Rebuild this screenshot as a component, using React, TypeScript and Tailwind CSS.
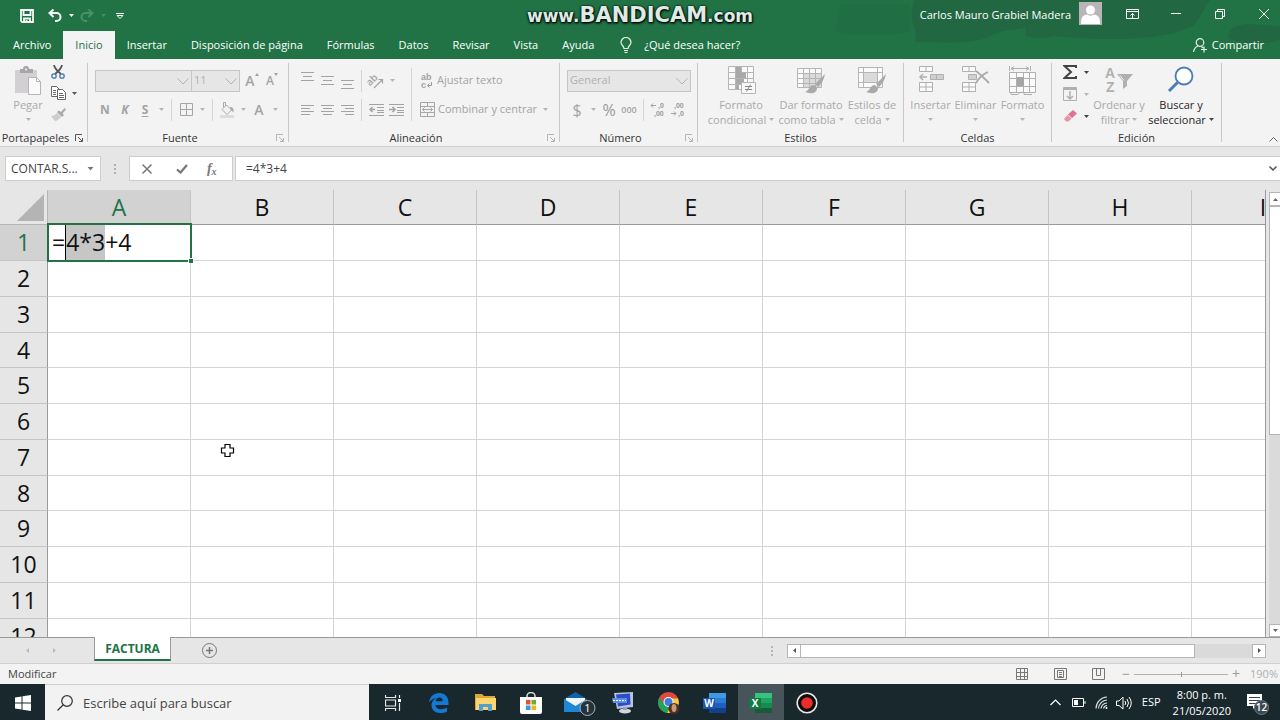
import type { ReactNode } from 'react';
import { clsx } from 'clsx';

const tabs = ['Archivo', 'Inicio', 'Insertar', 'Disposición de página', 'Fórmulas', 'Datos', 'Revisar', 'Vista', 'Ayuda'];
const columns = ['A', 'B', 'C', 'D', 'E', 'F', 'G', 'H', 'I'];
const rows = Array.from({ length: 12 }, (_, i) => i + 1);

const Caret = ({ className = 'text-[#b5b5b5]' }: { className?: string }) => (
  <svg width="5" height="3" viewBox="0 0 5 3" className={clsx('inline-block shrink-0', className)}>
    <path d="M0 0h5L2.5 3z" fill="currentColor" />
  </svg>
);

const CaretButton = ({ label, className }: { label: string; className?: string }) => (
  <button aria-label={label} className="flex h-5 w-3 shrink-0 items-center justify-center">
    <Caret className={className} />
  </button>
);

const IconButton = ({ label, children, className }: { label: string; children: ReactNode; className?: string }) => (
  <button aria-label={label} className={clsx('flex h-5 w-5 shrink-0 items-center justify-center', className)}>
    {children}
  </button>
);

const Divider = () => <span className="mx-1 h-[22px] w-px shrink-0 bg-[#d4d4d4]" />;

const Combo = ({ label, value, className }: { label: string; value: string; className: string }) => (
  <div className={clsx('relative h-[22px] shrink-0', className)}>
    <select
      aria-label={label}
      className="block h-full w-full appearance-none border border-[#c6c6c6] bg-[#e6e6e6] pl-[2px] text-[11px] text-[#b0b0b0] outline-none"
    >
      <option>{value}</option>
    </select>
    <svg width="12" height="7" viewBox="0 0 12 7" className="pointer-events-none absolute right-[3px] top-2">
      <path d="M.5.5 6 6 11.5.5" fill="none" stroke="#b0b0b0" />
    </svg>
  </div>
);

const Launcher = ({ label, className }: { label: string; className: string }) => (
  <button aria-label={label} className={clsx('flex w-4 shrink-0 items-center justify-center', className)}>
    <svg width="8" height="8" viewBox="0 0 8 8" fill="none" stroke="currentColor">
      <path d="M.5 7V.5H7M3 3l4 4M7.5 4v3.5H4" />
    </svg>
  </button>
);

type GroupProps = { title: string; width: string; launcher?: string; children: ReactNode };

const Group = ({ title, width, launcher, children }: GroupProps) => (
  <section aria-label={title} className={clsx('flex shrink-0', width)}>
    <div className="flex min-w-0 flex-1 flex-col">
      <div className="flex h-[67px] pt-[3px]">{children}</div>
      <div className="flex h-4 text-[11px] leading-4 text-[#333]">
        <span className="flex-1 text-center">{title}</span>
        {launcher && <Launcher label={`Configuración de ${title}`} className={launcher} />}
      </div>
    </div>
    <span className="mb-1 w-px bg-[#c8c8c8]" />
  </section>
);

type BigProps = { icon: ReactNode; lines: [string, string]; width: string; active?: boolean };

const BigButton = ({ icon, lines, width, active }: BigProps) => (
  <button
    className={clsx(
      'flex shrink-0 flex-col items-center whitespace-nowrap text-[11px] leading-[15px]',
      width,
      active ? 'text-[#262626]' : 'text-[#a9a9a9]',
    )}
  >
    <span className="flex h-[31px] items-start justify-center">{icon}</span>
    <span>{lines[0]}</span>
    <span className="flex h-[15px] items-center gap-[3px]">
      {lines[1]}
      <Caret className={active ? 'text-[#444]' : 'text-[#b5b5b5]'} />
    </span>
  </button>
);

/* Ribbon icons */

const PasteIcon = () => (
  <svg width="28" height="30" viewBox="0 0 28 30">
    <path d="M1 4h22v23H1z" fill="#d2d0d2" />
    <path d="M6 3h3a3 3 0 0 1 6 0h4v4H6z" fill="#a6a6a6" />
    <circle cx="12" cy="3.500" r="1" fill="#f3f3f3" />
    <path d="M14.500 11.500h8l4 4v13h-12z" fill="#fafafa" stroke="#b5b5b5" />
    <path d="M22.500 11.500v4h4" fill="none" stroke="#b5b5b5" />
  </svg>
);

const CutIcon = () => (
  <svg width="14" height="14" viewBox="0 0 14 14" fill="none">
    <path d="M3 0c.5 3 2 5 7 9M11 0c-.5 3-2 5-7 9" stroke="#555" strokeWidth="1.800" />
    <circle cx="3" cy="11" r="2.200" stroke="#3e78b3" strokeWidth="1.300" />
    <circle cx="11" cy="11" r="2.200" stroke="#3e78b3" strokeWidth="1.300" />
  </svg>
);

const CopyIcon = () => (
  <svg width="15" height="14" viewBox="0 0 15 14" fill="#fff" stroke="#666">
    <path d="M.5.5h5l3 3v7h-8z" />
    <path d="M2 4.500h3M2 6.500h3M2 8.500h3" />
    <path d="M6.500 3.500h5l3 3v7h-8z" />
    <path d="M8 7.500h4M8 9.500h5M8 11.500h5" />
  </svg>
);

const BrushIcon = () => (
  <svg width="15" height="13" viewBox="0 0 15 13">
    <path d="M0 8c3 0 4-1 6-3l4 4c-2 2-4 4-6 4z" fill="#cfcbc9" />
    <path d="m6 4 2-1.500L10 4l3.500-4L15 1.500 11.500 5.500 13 7l-2 2z" fill="#a9a9a9" />
  </svg>
);

const BorderIcon = () => (
  <svg width="13" height="13" viewBox="0 0 13 13" fill="none" stroke="#a6a6a6">
    <path d="M.5.5h12v12H.5zM6.500 1v11M1 6.500h11" />
  </svg>
);

const BucketIcon = () => (
  <svg width="16" height="16" viewBox="0 0 16 16" fill="none">
    <path d="M3 7.500 7.500 3l5 5-4.500 4.500zM6.500 4V.5h-2v5" stroke="#a9a9a9" />
    <path d="M11 5c3 0 4 2 3.500 5.500L12 8z" fill="#a9a9a9" />
    <path d="M1 13h14v3H1z" fill="#dedcdc" />
  </svg>
);

const linePaths = {
  vertical: 'M0 .5h13M2 4.500h9M0 8.500h13',
  left: 'M0 .5h13M0 3.500h9M0 6.500h13M0 9.500h9',
  center: 'M0 .5h13M2 3.500h9M0 6.500h13M2 9.500h9',
  right: 'M0 .5h13M4 3.500h9M0 6.500h13M4 9.500h9',
};

const Lines = ({ kind, className }: { kind: keyof typeof linePaths; className?: string }) => (
  <svg width="13" height="10" viewBox="0 0 13 10" className={className} stroke="#a3a3a3" fill="none">
    <path d={linePaths[kind]} />
  </svg>
);

const IndentIcon = ({ flip }: { flip?: boolean }) => (
  <svg width="15" height="12" viewBox="0 0 15 12" fill="none" stroke="#a3a3a3">
    <path d="M0 .5h15M8 3.500h7M8 6.500h7M8 8.500h7M0 11.500h15" />
    <path d={flip ? 'M0 5.500h6M3.500 3 6 5.500 3.500 8' : 'M6 5.500H1M3.500 3 1 5.500 3.500 8'} strokeWidth="1.500" />
  </svg>
);

const OrientationIcon = () => (
  <svg width="16" height="14" viewBox="0 0 16 14" className="overflow-visible">
    <text x="0" y="10" fontSize="10" fontWeight="600" fill="#a3a3a3" transform="rotate(-45 4 9)">ab</text>
    <path d="M6 14 14 6M10.500 5.500H14.500v4" fill="none" stroke="#a3a3a3" strokeWidth="1.200" />
  </svg>
);

const WrapIcon = () => (
  <svg width="13" height="16" viewBox="0 0 13 16" className="overflow-visible font-['Liberation_Sans']">
    <text x="1" y="7" fontSize="9" fontWeight="700" fill="#a3a3a3">ab</text>
    <text x="1" y="15" fontSize="9" fontWeight="700" fill="#a3a3a3">c</text>
    <path d="M11.500 9v3.500H7.500M9.500 10.500l-2 2 2 2" fill="none" stroke="#999" />
  </svg>
);

const MergeIcon = () => (
  <svg width="15" height="15" viewBox="0 0 15 15" fill="none" stroke="#a6a6a6">
    <path d="M.5.5h14v14H.5zM0 4.500h15M0 10.500h15M7.500 0v4M7.500 11v4M2.500 7.500h10M4.500 5.500l-2 2 2 2M10.500 5.500l2 2-2 2" />
  </svg>
);

const DecimalIcon = ({ less }: { less?: boolean }) => (
  <svg width="16" height="15" viewBox="0 0 16 15" fill="#999" className="overflow-visible font-['Liberation_Sans']">
    <text x={less ? 4 : 8} y="6" fontSize="7" fontWeight="700">{less ? ',00' : ',0'}</text>
    <text x={less ? 8 : 4} y="14" fontSize="7" fontWeight="700">{less ? ',0' : ',00'}</text>
    <path d={less ? 'M1 11.500h5M4 9.500l2 2-2 2' : 'M6 3.500H1M3 1.500l-2 2 2 2'} fill="none" stroke="#a3a3a3" />
  </svg>
);

const ConditionalIcon = () => (
  <svg width="29" height="29" viewBox="0 0 29 29" fill="none" stroke="#b5b5b5">
    <path d="M1.500.5h25v23h-25zM1.500 6.500h25M1.500 12.500h25M1.500 18.500h25M8.500.5v23M14.500.5v23M20.500.5v23" fill="#fafafa" />
    <path d="M9 1h5v6H9zM9 7h10v5H9zM9 13h8v5H9zM9 19h3v4H9z" fill="#a9a9a9" stroke="none" />
    <path d="M14.500 16.500h14v11h-14z" fill="#f7f7f7" />
    <path d="M18 20.500h7M18 23.500h7M23.500 18.500l-4 7" stroke="#888" />
  </svg>
);

const Brush = () => (
  <>
    <path d="M28 8 18 18l3 3c3-3 6-7 7-13z" fill="#a9a9a9" stroke="none" />
    <path d="M17 19c-5 0-4 5-9 7 5 2 12 2 12-4z" fill="#a9a9a9" stroke="none" />
  </>
);

const TableFormatIcon = () => (
  <svg width="28" height="29" viewBox="0 0 28 29" fill="none" stroke="#b5b5b5">
    <path d="M.5 2.500h24v19H.5z" fill="#fafafa" />
    <path d="M7 7h17v14H7z" fill="#dadada" stroke="none" />
    <path d="M.5 7.500h24M.5 12.500h24M.5 17.500h24M6.500 2.500v19M12.500 2.500v19M18.500 2.500v19" />
    <Brush />
  </svg>
);

const CellStyleIcon = () => (
  <svg width="28" height="29" viewBox="0 0 28 29" fill="none" stroke="#b5b5b5">
    <path d="M.5 1.500h24v20H.5z" fill="#fafafa" />
    <path d="M.5 6.500h24M.5 16.500h24M5.500 1.500v20M19.500 1.500v20" />
    <path d="M6 7h13v9H6z" fill="#dadada" stroke="none" />
    <Brush />
  </svg>
);

const InsertIcon = () => (
  <svg width="26" height="26" viewBox="0 0 26 26" fill="#fafafa" stroke="#b0b0b0">
    <path d="M1.500.5h13v5h-13zM8 .5v5" />
    <path d="M12.500 8.500h13v5h-13z" fill="#d0d0d0" />
    <path d="M18.500 8.500v5" />
    <path d="M9 11H2M5 8l-3 3 3 3" fill="none" strokeWidth="1.500" />
    <path d="M1.500 16.500h13v9h-13zM1.500 21h13M8 16.500v9" />
  </svg>
);

const DeleteIcon = () => (
  <svg width="28" height="26" viewBox="0 0 28 26" fill="#fafafa" stroke="#b0b0b0">
    <path d="M.5.5h13v5H.5zM7 .5v5" />
    <path d="M6.500 8.500h8v5h-8z" fill="#d0d0d0" />
    <path d="M.5 16.500h13v9H.5zM.5 21h13M7 16.500v9" />
    <path d="M14 5c4 3 8 7 13 12M26 6c-5 2-9 6-12 11" fill="none" stroke="#a9a9a9" strokeWidth="1.800" />
  </svg>
);

const FormatIcon = () => (
  <svg width="27" height="29" viewBox="0 0 27 29" fill="none" stroke="#b0b0b0">
    <path d="M.5 0v5M21.500 0v5M2 2.500h18M5 .5l-3 2 3 2M17 .5l3 2-3 2" />
    <path d="M.5 6.500h26v20h-26z" fill="#fafafa" />
    <path d="M.5 12.500h26M.5 20.500h26M7.500 6.500v20M14.500 6.500v20M20.500 6.500v20" />
    <path d="M8 11h7v9H8z" fill="#a6a6a6" stroke="none" />
    <path d="M2 27v1.500h7l3-3M15 27v1.500h8" />
  </svg>
);

const FillIcon = () => (
  <svg width="14" height="14" viewBox="0 0 14 14" fill="none" stroke="#b0b0b0">
    <path d="M.5.5h13v13H.5z" />
    <path d="M1 1h12v2H1z" fill="#b0b0b0" stroke="none" />
    <path d="M7 4v8M4 9l3 3 3-3" strokeWidth="1.500" />
  </svg>
);

const EraserIcon = () => (
  <svg width="13" height="12" viewBox="0 0 13 12">
    <path d="M9 0 13 3.500 8 8 4 4.500z" fill="#e0728e" />
    <path d="M3.500 5 7.500 8.500 4.500 11.500H2L0 9z" fill="#e893a8" />
  </svg>
);

const SortIcon = () => (
  <svg width="28" height="28" viewBox="0 0 28 28" fill="#b0b0b0" className="overflow-visible font-['Liberation_Sans']">
    <text x="0" y="12" fontSize="14" fontWeight="700">A</text>
    <text x="1" y="26" fontSize="14" fontWeight="700">Z</text>
    <path d="M12 8h16l-6 7v5l-4 3v-8z" />
    <path d="m15 9.500 4 5" stroke="#f3f3f3" />
  </svg>
);

const SearchIcon = () => (
  <svg width="28" height="28" viewBox="0 0 28 28" fill="none">
    <circle cx="17" cy="10" r="8.500" fill="#fff" stroke="#4a7db5" strokeWidth="1.800" />
    <path d="M10.500 16.500 2 25" stroke="#4a7db5" strokeWidth="3" />
  </svg>
);

/* Window chrome */

const TitleBar = () => (
  <header className="relative flex h-[31px] shrink-0 items-center overflow-hidden pl-[17px] text-white">
    <IconButton label="Guardar">
      <svg width="14" height="14" viewBox="0 0 14 14" fill="none" stroke="#f4faf6" strokeWidth="1.800">
        <path d="M1 1h12v12H2L1 12zM3.500 1v5h7V1M4 13V9.500h6V13M6.500 11v2" />
      </svg>
    </IconButton>
    <IconButton label="Deshacer" className="ml-2">
      <svg width="14" height="13" viewBox="0 0 14 13" fill="none" stroke="#f4faf6" strokeWidth="2">
        <path d="M5.500.5 1.500 4l4 4M2 4h6.500a4 4 0 0 1 0 8H7" />
      </svg>
    </IconButton>
    <CaretButton label="Lista de deshacer" className="text-white" />
    <IconButton label="Rehacer">
      <svg width="14" height="13" viewBox="0 0 14 13" fill="none" stroke="#46906a" strokeWidth="2">
        <path d="m8.500.5 4 3.500-4 4M12 4H5.500a4 4 0 0 0 0 8H7" />
      </svg>
    </IconButton>
    <CaretButton label="Lista de rehacer" className="text-[#46906a]" />
    <IconButton label="Personalizar barra de acceso rápido" className="ml-px">
      <svg width="8" height="6" viewBox="0 0 8 6" fill="none" stroke="#f4faf6">
        <path d="M0 .5h8M1 2.500h6L4 5.500z" />
      </svg>
    </IconButton>

    <div className="absolute left-1/2 top-[3px] flex -translate-x-1/2 items-baseline whitespace-nowrap font-['DejaVu_Sans'] text-[17px] font-bold leading-6 text-[#dfeae4] [text-shadow:0_0_2px_#000,0_1px_3px_#000,1px_1px_2px_#062412]">
      www.<span className="text-[21px] leading-6">BANDICAM</span>.com
    </div>

    <div className="-mr-[6px] ml-auto flex items-center">
      <span className="mr-2 text-[11px]">Carlos Mauro Grabiel Madera</span>
      <svg width="23" height="23" viewBox="0 0 23 23" className="mb-1 mr-2">
        <path d="M0 0h23v23H0z" fill="#b9b5b6" />
        <circle cx="11.500" cy="8" r="4.500" fill="#fff" />
        <path d="M2 22c0-7 2-9 6-9.500 2 1.500 5 1.500 7 0 4 .5 6 2.500 6 9.500z" fill="#fff" />
      </svg>
      <button aria-label="Opciones de la cinta" className="mb-1 flex h-6 w-11 items-center justify-center">
        <svg width="13" height="10" viewBox="0 0 13 10" fill="none" stroke="#fff">
          <path d="M.5.5h12v9H.5zM.5 2.500h12M6.500 9V4.500M4.500 6.500l2-2 2 2" />
        </svg>
      </button>
      <button aria-label="Minimizar" className="mb-1 flex h-6 w-11 items-center justify-center">
        <span className="h-px w-[10px] bg-white" />
      </button>
      <button aria-label="Restaurar" className="mb-1 flex h-6 w-11 items-center justify-center">
        <svg width="10" height="10" viewBox="0 0 10 10" fill="none" stroke="#fff">
          <path d="M.5 2.500h7v7h-7zM2.500 2.500v-2h7v7h-2" />
        </svg>
      </button>
      <button aria-label="Cerrar" className="mb-1 flex h-6 w-11 items-center justify-center">
        <svg width="10" height="10" viewBox="0 0 10 10" stroke="#fff">
          <path d="m0 0 10 10M10 0 0 10" />
        </svg>
      </button>
    </div>
  </header>
);

const TabBar = () => (
  <nav className="relative flex h-7 shrink-0 pl-px text-[11px] text-white">
    {tabs.map((tab) => (
      <a
        key={tab}
        href="#"
        className={clsx('flex items-center px-3', tab === 'Inicio' && 'bg-[#f3f3f3] text-[#217346]')}
      >
        {tab}
      </a>
    ))}
    <button className="ml-[14px] flex items-center gap-3">
      <svg width="12" height="16" viewBox="0 0 12 16" fill="none" stroke="#e8f1ec" strokeWidth="1.200">
        <path d="M4 11.500C4 9 1 8 1 5.500a5 5 0 0 1 10 0C11 8 8 9 8 11.500zM4 13.500h4M4.500 15.500h3" />
      </svg>
      ¿Qué desea hacer?
    </button>
    <button className="ml-auto mr-4 flex items-center gap-[5px]">
      <svg width="14" height="15" viewBox="0 0 14 15" fill="none" stroke="#e8f1ec" strokeWidth="1.200">
        <circle cx="7" cy="4.500" r="3.800" />
        <path d="M.5 14c.5-3 2-5 4.500-6M8.500 8.500 10 10M11 8.500v6M8 11.500h6" />
      </svg>
      Compartir
    </button>
  </nav>
);

const Ribbon = () => (
  <div className="flex shrink-0 border-b border-[#d0d0d0] bg-[#f3f3f3] pt-1 text-[#a3a3a3]">
    <Group title="Portapapeles" width="w-[88px]" launcher="text-[#555]">
      <button className="ml-2 flex w-10 flex-col items-center text-[11px] leading-[15px] text-[#a9a9a9]">
        <span className="flex h-[31px] items-start">
          <PasteIcon />
        </span>
        Pegar
        <span className="flex h-[15px] items-center">
          <Caret />
        </span>
      </button>
      <div className="flex flex-col gap-px">
        <IconButton label="Cortar" className="-mt-1"><CutIcon /></IconButton>
        <div className="flex items-center">
          <IconButton label="Copiar"><CopyIcon /></IconButton>
          <CaretButton label="Opciones de copia" className="text-[#555]" />
        </div>
        <IconButton label="Copiar formato"><BrushIcon /></IconButton>
      </div>
    </Group>

    <Group title="Fuente" width="w-[201px]" launcher="text-[#b5b5b5]">
      <div className="flex flex-col pl-[7px]">
        <div className="flex h-[29px] items-center">
          <Combo label="Fuente" value="" className="w-[97px]" />
          <Combo label="Tamaño de fuente" value="11" className="-ml-px mr-[2px] w-[49px]" />
          <IconButton label="Aumentar tamaño" className="font-semibold">
            <span className="text-sm leading-none">A</span>
            <svg width="4" height="3" viewBox="0 0 4 3" className="mb-3">
              <path d="M0 3h4L2 0z" fill="currentColor" />
            </svg>
          </IconButton>
          <IconButton label="Reducir tamaño" className="font-semibold">
            <span className="text-xs leading-none">A</span>
            <svg width="4" height="3" viewBox="0 0 4 3" className="mb-3">
              <path d="M0 0h4L2 3z" fill="currentColor" />
            </svg>
          </IconButton>
        </div>
        <div className="flex h-[29px] items-center text-xs">
          <IconButton label="Negrita" className="font-bold">N</IconButton>
          <IconButton label="Cursiva" className="font-bold italic">K</IconButton>
          <IconButton label="Subrayado" className="font-bold underline underline-offset-2">S</IconButton>
          <CaretButton label="Opciones de subrayado" />
          <Divider />
          <IconButton label="Bordes"><BorderIcon /></IconButton>
          <CaretButton label="Opciones de bordes" />
          <Divider />
          <IconButton label="Color de relleno"><BucketIcon /></IconButton>
          <CaretButton label="Opciones de relleno" />
          <IconButton label="Color de fuente" className="text-sm font-semibold">A</IconButton>
          <CaretButton label="Opciones de color" />
        </div>
      </div>
    </Group>

    <Group title="Alineación" width="w-[271px]" launcher="text-[#b5b5b5]">
      <div className="flex w-[122px] flex-col pl-2">
        <div className="flex h-[29px] items-center">
          <IconButton label="Alinear en la parte superior"><Lines kind="vertical" className="mb-2" /></IconButton>
          <IconButton label="Alinear en el medio"><Lines kind="vertical" /></IconButton>
          <IconButton label="Alinear en la parte inferior"><Lines kind="vertical" className="mt-2" /></IconButton>
          <Divider />
          <IconButton label="Orientación"><OrientationIcon /></IconButton>
          <CaretButton label="Opciones de orientación" />
        </div>
        <div className="flex h-[29px] items-center">
          <IconButton label="Alinear a la izquierda"><Lines kind="left" /></IconButton>
          <IconButton label="Centrar"><Lines kind="center" /></IconButton>
          <IconButton label="Alinear a la derecha"><Lines kind="right" /></IconButton>
          <Divider />
          <IconButton label="Disminuir sangría"><IndentIcon /></IconButton>
          <IconButton label="Aumentar sangría"><IndentIcon flip /></IconButton>
        </div>
      </div>
      <span className="mt-[2px] h-[53px] w-px bg-[#d4d4d4]" />
      <div className="flex flex-col pl-2 text-[11px]">
        <button className="flex h-[29px] items-center gap-1">
          <WrapIcon />
          Ajustar texto
        </button>
        <div className="flex h-[29px] items-center">
          <button className="flex items-center gap-[3px]">
            <MergeIcon />
            Combinar y centrar
          </button>
          <span className="ml-[2px] flex">
            <CaretButton label="Opciones de combinar" />
          </span>
        </div>
      </div>
    </Group>

    <Group title="Número" width="w-[138px]" launcher="text-[#b5b5b5]">
      <div className="flex flex-col pl-[7px]">
        <div className="flex h-[29px] items-center">
          <Combo label="Formato de número" value="General" className="w-[124px]" />
        </div>
        <div className="flex h-[29px] items-center text-base">
          <IconButton label="Formato de moneda">$</IconButton>
          <CaretButton label="Opciones de moneda" />
          <IconButton label="Porcentaje" className="text-[#999]">%</IconButton>
          <IconButton label="Estilo millares" className="text-[9px] font-semibold">000</IconButton>
          <Divider />
          <IconButton label="Aumentar decimales"><DecimalIcon /></IconButton>
          <IconButton label="Disminuir decimales"><DecimalIcon less /></IconButton>
        </div>
      </div>
    </Group>

    <Group title="Estilos" width="w-[206px]">
      <div className="flex pl-2">
        <BigButton icon={<ConditionalIcon />} lines={['Formato', 'condicional']} width="w-[70px]" />
        <BigButton icon={<TableFormatIcon />} lines={['Dar formato', 'como tabla']} width="w-[70px]" />
        <BigButton icon={<CellStyleIcon />} lines={['Estilos de', 'celda']} width="w-[52px]" />
      </div>
    </Group>

    <Group title="Celdas" width="w-[148px]">
      <div className="flex pl-1">
        <BigButton icon={<InsertIcon />} lines={['Insertar', '']} width="w-[45px]" />
        <BigButton icon={<DeleteIcon />} lines={['Eliminar', '']} width="w-[45px]" />
        <BigButton icon={<FormatIcon />} lines={['Formato', '']} width="w-[49px]" />
      </div>
    </Group>

    <Group title="Edición" width="w-[170px]">
      <div className="ml-2 flex flex-col gap-[2px]">
        <div className="-mt-1 flex">
          <IconButton label="Autosuma">
            <svg width="14" height="14" viewBox="0 0 14 14" fill="none" stroke="#444" strokeWidth="2">
              <path d="M13 3V1H1.500L8 7l-6.500 6H13v-2" />
            </svg>
          </IconButton>
          <CaretButton label="Opciones de autosuma" className="text-[#444]" />
        </div>
        <div className="flex">
          <IconButton label="Rellenar"><FillIcon /></IconButton>
          <CaretButton label="Opciones de relleno de celdas" />
        </div>
        <div className="flex">
          <IconButton label="Borrar"><EraserIcon /></IconButton>
          <CaretButton label="Opciones de borrado" className="text-[#444]" />
        </div>
      </div>
      <BigButton icon={<SortIcon />} lines={['Ordenar y', 'filtrar']} width="w-[54px]" />
      <BigButton icon={<SearchIcon />} lines={['Buscar y', 'seleccionar']} width="w-[70px]" active />
    </Group>

    <button aria-label="Contraer la cinta" className="ml-auto flex items-end pb-1 pr-[2px]">
      <svg width="9" height="5" viewBox="0 0 9 5" fill="none" stroke="#666">
        <path d="M.5 4.500l4-4 4 4" />
      </svg>
    </button>
  </div>
);

const FormulaBar = () => (
  <div className="flex h-[43px] shrink-0 pb-[9px] pl-[5px] pt-[9px] text-xs text-[#444]">
    <div className="flex w-24 items-center justify-between border border-[#cdcdcd] bg-white pr-[7px]">
      <input aria-label="Cuadro de nombres" defaultValue="CONTAR.S..." className="w-[78px] pl-[5px] outline-none" />
      <Caret className="scale-125 text-[#777]" />
    </div>
    <div className="flex w-7 flex-col items-center justify-center gap-[2px]">
      <span className="h-[2px] w-[2px] bg-[#b0b0b0]" />
      <span className="h-[2px] w-[2px] bg-[#b0b0b0]" />
      <span className="h-[2px] w-[2px] bg-[#b0b0b0]" />
    </div>
    <div className="flex w-[104px] items-center justify-around border border-[#cdcdcd] bg-white pr-2">
      <IconButton label="Cancelar">
        <svg width="10" height="10" viewBox="0 0 10 10" stroke="#777" strokeWidth="1.500">
          <path d="m.5.5 9 9M9.500.5l-9 9" />
        </svg>
      </IconButton>
      <IconButton label="Introducir">
        <svg width="12" height="10" viewBox="0 0 12 10" fill="none" stroke="#777" strokeWidth="2.200">
          <path d="m1 5.500 3.500 3L11 1" />
        </svg>
      </IconButton>
      <button className="font-['Liberation_Serif'] text-sm font-bold italic text-[#777]">
        f<sub className="text-[10px]">x</sub>
      </button>
    </div>
    <div className="ml-[2px] flex flex-1 items-center border border-r-0 border-[#cdcdcd] bg-white pr-[3px]">
      <input aria-label="Barra de fórmulas" defaultValue="=4*3+4" className="flex-1 pl-[10px] outline-none" />
      <svg width="8" height="5" viewBox="0 0 8 5" fill="none" stroke="#555" strokeWidth="1.500">
        <path d="m.5.5 3.500 3.500L7.500.5" />
      </svg>
    </div>
  </div>
);

const Sheet = () => (
  <main className="relative flex min-h-0 flex-1">
    <div className="min-w-0 flex-1 overflow-hidden border-r border-[#999] bg-white">
      <table className="w-0 table-fixed border-separate border-spacing-0 text-[23px] leading-none text-[#111]">
        <colgroup>
          <col className="w-12" />
          {columns.map((c) => (
            <col key={c} className="w-[143px]" />
          ))}
        </colgroup>
        <thead>
          <tr className="h-[35px]">
            <th className="border-b border-r border-[#b5b5b5] bg-[#e6e6e6] p-0">
              <svg width="27" height="27" viewBox="0 0 27 27" className="ml-[17px]">
                <path d="M27 0v27H0z" fill="#b4b4b4" />
              </svg>
            </th>
            {columns.map((c) => (
              <th
                key={c}
                className={clsx(
                  'border-b border-r border-r-[#c4c4c4] border-b-[#999] p-0 font-normal',
                  c === 'A' ? 'bg-[#d2d2d2] text-[#217346]' : 'bg-[#e6e6e6]',
                )}
              >
                {c}
              </th>
            ))}
          </tr>
        </thead>
        <tbody>
          {rows.map((r) => (
            <tr key={r} className={r % 4 === 0 ? 'h-[35px]' : 'h-9'}>
              <th
                className={clsx(
                  'border-b border-r border-b-[#c4c4c4] border-r-[#999] p-0 font-normal',
                  r === 1 ? 'bg-[#d2d2d2] text-[#217346]' : 'bg-[#e6e6e6]',
                )}
              >
                {r}
              </th>
              {columns.map((c) => (
                <td key={c} className="relative border-b border-r border-[#d4d4d4] p-0">
                  {c === 'A' && r === 1 && (
                    <div className="absolute -bottom-[2px] -left-px -right-[2px] -top-[2px] z-10 flex items-center border-2 border-[#217346] bg-white pl-[3px]">
                      =
                      <span className="flex h-full items-center border-l border-black bg-[#c6c6c6]">4*3</span>
                      +4
                      <span className="absolute -bottom-[3px] -right-[3px] h-[5px] w-[5px] border-l border-t border-white bg-[#217346]" />
                    </div>
                  )}
                </td>
              ))}
            </tr>
          ))}
        </tbody>
      </table>
    </div>

    {/* Vertical scroll bar */}
    <div className="ml-[3px] mt-[2px] flex w-[11px] shrink-0 flex-col bg-[#dadada]">
      <button aria-label="Desplazar arriba" className="flex h-[14px] shrink-0 items-center justify-center border border-r-0 border-[#b5b5b5] bg-white">
        <Caret className="rotate-180 text-[#666]" />
      </button>
      <div className="h-[229px] shrink-0 border border-r-0 border-[#b5b5b5] bg-white" />
      <button aria-label="Desplazar abajo" className="mt-auto flex h-[13px] shrink-0 items-center justify-center border border-r-0 border-[#b5b5b5] bg-white">
        <Caret className="text-[#666]" />
      </button>
    </div>

    {/* Mouse pointer */}
    <svg width="15" height="15" viewBox="0 0 15 15" className="absolute left-[220px] top-[253px]">
      <path d="M5 1.500h5V5h3.500v5H10v3.500H5V10H1.500V5H5z" fill="#fff" stroke="#000" strokeWidth="1.200" />
    </svg>
  </main>
);

const SheetBar = () => (
  <div className="flex h-[27px] shrink-0 items-start border-b border-t border-b-[#d0d0d0] border-t-[#999]">
    <div className="flex w-[94px] justify-center gap-[22px] self-center pr-3">
      <button aria-label="Hoja anterior" className="flex"><Caret className="rotate-90 text-[#bbb]" /></button>
      <button aria-label="Hoja siguiente" className="flex"><Caret className="-rotate-90 text-[#bbb]" /></button>
    </div>
    <button className="-mt-px h-6 w-[77px] border-x border-b-2 border-x-[#999] border-b-[#217346] bg-white pt-[2px] text-xs font-bold text-[#217346]">
      FACTURA
    </button>
    <button aria-label="Hoja nueva" className="ml-[31px] self-center">
      <svg width="15" height="15" viewBox="0 0 15 15" fill="none" stroke="#777">
        <circle cx="7.500" cy="7.500" r="7" />
        <path d="M7.500 4v7M4 7.500h7" strokeWidth="1.500" />
      </svg>
    </button>
    <div className="ml-auto flex h-[14px] w-[495px] items-stretch self-center">
      <div className="flex w-[2px] flex-col justify-between py-[2px]">
        <span className="h-[2px] bg-[#b5b5b5]" />
        <span className="h-[2px] bg-[#b5b5b5]" />
        <span className="h-[2px] bg-[#b5b5b5]" />
      </div>
      <button aria-label="Desplazar a la izquierda" className="ml-[14px] flex w-[14px] items-center justify-center border border-[#b5b5b5] bg-white">
        <Caret className="rotate-90 text-[#555]" />
      </button>
      <div className="w-[394px] border border-l-0 border-[#b5b5b5] bg-white" />
      <div className="flex-1 bg-[#dadada]" />
      <button aria-label="Desplazar a la derecha" className="flex w-[14px] items-center justify-center border border-[#b5b5b5] bg-white">
        <Caret className="-rotate-90 text-[#555]" />
      </button>
    </div>
    <span className="w-[14px]" />
  </div>
);

const StatusBar = () => (
  <footer className="flex h-5 shrink-0 items-center bg-[#f3f3f3] pl-2 pr-[2px] text-[11px] text-[#444]">
    Modificar
    <div className="ml-auto flex items-center">
      <button aria-label="Normal" className="w-[38px]">
        <svg width="12" height="12" viewBox="0 0 12 12" fill="none" stroke="#777">
          <path d="M.5.5h11v11H.5zM4.500 0v12M8.500 0v12M0 4.500h12M0 8.500h12" />
        </svg>
      </button>
      <button aria-label="Diseño de página" className="w-[38px]">
        <svg width="13" height="12" viewBox="0 0 13 12" fill="none" stroke="#777">
          <path d="M.5.5h12v11H.5zM3.500 2.500h6v7h-6zM5 4.500h3M5 6.500h3M5 8.500h3" />
        </svg>
      </button>
      <button aria-label="Vista previa de salto de página" className="w-[30px]">
        <svg width="13" height="12" viewBox="0 0 13 12" fill="none" stroke="#777">
          <path d="M.5.5h12v11H.5zM4.500 0v7.500h4V0" />
        </svg>
      </button>
      <button aria-label="Alejar" className="text-sm leading-none text-[#999]">−</button>
      <input
        type="range"
        aria-label="Zoom"
        className="mx-1 h-px w-[94px] appearance-none bg-[#b0b0b0] [&::-webkit-slider-thumb]:h-[5px] [&::-webkit-slider-thumb]:w-px [&::-webkit-slider-thumb]:appearance-none [&::-webkit-slider-thumb]:bg-[#999]"
      />
      <button aria-label="Acercar" className="text-sm leading-none text-[#999]">+</button>
      <span className="ml-[10px] text-[11px] text-[#b0b0b0]">190%</span>
    </div>
  </footer>
);

/* Taskbar */

const OfficeIcon = ({ letter, shades, tile }: { letter: string; shades: string[]; tile: string }) => (
  <svg width="24" height="20" viewBox="0 0 24 20">
    {shades.map((shade, i) => (
      <path key={shade} d={`M6 ${i * 5}h17v5H6z`} fill={shade} />
    ))}
    <path d="M0 5h12v11H0z" fill={tile} />
    <text x="6" y="14" textAnchor="middle" fontSize="10" fontWeight="700" fill="#fff">{letter}</text>
  </svg>
);

const taskbarApps = [
  {
    name: 'Vista de tareas',
    icon: (
      <svg width="16" height="16" viewBox="0 0 16 16" fill="none" stroke="#e8e8e8" strokeWidth="1.200">
        <path d="M.5 0v2.500h10V0M.5 5h10v6H.5zM.5 16v-2.500h10V16M14.500 0v3M14.500 8v8" />
        <path d="M13 4h3v3h-3z" fill="#fff" stroke="none" />
      </svg>
    ),
  },
  {
    name: 'Microsoft Edge',
    icon: (
      <svg width="20" height="20" viewBox="0 0 20 20">
        <path d="M0 9.500C.8 3.500 5 0 10.200 0 16 0 19.500 4 19.500 9.500V12H6.500c.2 3 2.500 4.300 5.500 4.300 2.200 0 4.200-.6 6-1.700v3.900C16 19.600 13.700 20 11.200 20 5.800 20 2.500 16.800 2.500 12.300c0-3.200 1.800-5.800 4.700-7.200C4.500 5.500 1.800 6.900 0 9.500zm6.700-1.200h7c0-2.500-1.200-3.800-3.400-3.800-2 0-3.300 1.500-3.600 3.800z" fill="#1478d4" />
      </svg>
    ),
  },
  {
    name: 'Explorador de archivos',
    icon: (
      <svg width="21" height="19" viewBox="0 0 21 19">
        <path d="M0 1h7l2 2h11v14H0z" fill="#e0a63a" />
        <path d="M1 5h20v12H1z" fill="#fbd56f" />
        <path d="M4 11h13v7h-4v-4H8v4H4z" fill="#4f9fd0" />
      </svg>
    ),
  },
  {
    name: 'Microsoft Store',
    icon: (
      <svg width="22" height="22" viewBox="0 0 22 22">
        <path d="M7 6V4a4 3.500 0 0 1 8 0v2" fill="none" stroke="#ddd" strokeWidth="1.500" />
        <path d="M0 5h22v15q0 2-2 2H2q-2 0-2-2z" fill="#fff" />
        <path d="M6 8h4.500v4.500H6z" fill="#e8502c" />
        <path d="M11.500 8H16v4.500h-4.500z" fill="#6aae2b" />
        <path d="M6 13.500h4.500V18H6z" fill="#2b9ee8" />
        <path d="M11.500 13.500H16V18h-4.500z" fill="#f5b316" />
      </svg>
    ),
  },
  {
    name: 'Correo',
    icon: (
      <svg width="32" height="26" viewBox="0 0 32 26" className="ml-[6px]">
        <path d="M0 9 11.500 2 23 9v13H0z" fill="#0f62ac" />
        <path d="M2 8h19v8H2z" fill="#eef5fb" />
        <path d="M0 9l11.500 7L23 9v13H0z" fill="#1b87d6" />
        <circle cx="23.500" cy="18" r="7.500" fill="#24343a" stroke="#a9b0b3" />
        <text x="23.500" y="22" textAnchor="middle" fontSize="11" fill="#fff">1</text>
      </svg>
    ),
  },
  {
    name: 'Equipo remoto',
    icon: (
      <svg width="22" height="22" viewBox="0 0 22 22">
        <path d="M2 1 21 0v15L5 17z" fill="#b9c2e2" />
        <path d="m4 2.500 14-1 .5 11L6 14.500z" fill="#2a4fc4" />
        <path d="M0 6h15v5H1z" fill="#5d8ce8" />
        <path d="M1 8.500h13" stroke="#fff" strokeDasharray="2 1" />
        <ellipse cx="13" cy="19" rx="6" ry="2.500" fill="#d5d7de" />
        <path d="M11 15h4v3h-4z" fill="#9ba1b5" />
      </svg>
    ),
  },
  {
    name: 'Google Chrome',
    icon: (
      <svg width="22" height="22" viewBox="0 0 22 22">
        <circle cx="10.500" cy="10.500" r="10.500" fill="#dd4b3e" />
        <path d="M1.400 5.300A10.500 10.500 0 0 0 9 20.900L13 13 6 12z" fill="#21a35a" />
        <path d="M9 20.900A10.500 10.500 0 0 0 20 6.500h-9l3 6z" fill="#f7cb3d" />
        <circle cx="10.500" cy="10" r="5" fill="#fff" />
        <circle cx="10.500" cy="10" r="4" fill="#3f7ee0" />
        <circle cx="16" cy="16.500" r="5.500" fill="#4c2f22" />
        <ellipse cx="16" cy="16" rx="2.500" ry="4" fill="#c99a78" />
      </svg>
    ),
  },
  {
    name: 'Word',
    icon: <OfficeIcon letter="W" shades={['#3d9be5', '#2b7cd3', '#1f5fbc', '#12408c']} tile="#1a57b5" />,
  },
  {
    name: 'Excel',
    icon: <OfficeIcon letter="X" shades={['#33c481', '#21a366', '#178a50', '#185c37']} tile="#107c41" />,
  },
  {
    name: 'Bandicam',
    icon: (
      <svg width="22" height="22" viewBox="0 0 22 22">
        <circle cx="11" cy="11" r="9.800" fill="#0b0b0b" stroke="#e6e6e6" strokeWidth="1.600" />
        <circle cx="11" cy="11" r="5.800" fill="#ee2b2b" />
      </svg>
    ),
  },
];

const Taskbar = () => (
  <div className="flex h-9 shrink-0 items-stretch bg-[#19282d] pt-px text-white">
    <button aria-label="Inicio" className="flex w-[45px] items-center justify-center">
      <svg width="16" height="16" viewBox="0 0 16 16" fill="#fff">
        <path d="M0 2.500 6.500 1.500v6H0zM7.500 1.300 16 0v7.500H7.500zM0 8.500h6.500v6L0 13.500zM7.500 8.500H16V16l-8.500-1.300z" />
      </svg>
    </button>
    <label className="-mt-px flex w-[324px] items-center gap-[10px] border-t border-[#d0d0d0] bg-[#f2f2f2] pl-3 pt-px">
      <svg width="16" height="16" viewBox="0 0 16 16" fill="none" stroke="#333" strokeWidth="1.200">
        <circle cx="10" cy="6" r="5.300" />
        <path d="M6.300 9.800.5 15.500" />
      </svg>
      <input placeholder="Escribe aquí para buscar" className="min-w-0 flex-1 pt-px text-[13px] outline-none placeholder:text-[#444]" />
    </label>
    <div className="-mt-px ml-px flex">
      {taskbarApps.map(({ name, icon }) => (
        <button
          key={name}
          aria-label={name}
          className={clsx('flex w-[46px] items-center justify-center pt-px', name === 'Excel' && 'bg-[#47545a]')}
        >
          {icon}
        </button>
      ))}
    </div>

    <div className="ml-auto flex items-center pr-[9px] text-[11px]">
      <button aria-label="Mostrar iconos ocultos" className="flex w-6 justify-center">
        <svg width="11" height="7" viewBox="0 0 11 7" fill="none" stroke="#fff" strokeWidth="1.200">
          <path d="m.5 6 5-5 5 5" />
        </svg>
      </button>
      <button aria-label="Batería" className="flex w-[22px] justify-center">
        <svg width="14" height="9" viewBox="0 0 14 9" fill="none" stroke="#fff">
          <path d="M.5.5h11v8H.5zM13 3v3" />
          <path d="M2 2h4v5H2z" fill="#fff" stroke="none" />
        </svg>
      </button>
      <button aria-label="Red" className="flex w-[23px] justify-center">
        <svg width="13" height="13" viewBox="0 0 13 13" fill="none" stroke="#d8dcdd" strokeWidth="1.200">
          <path d="M1 12.500A11.500 11.500 0 0 1 12 1M3.500 12.500A9 9 0 0 1 12 4M6 12.500A6.500 6.500 0 0 1 12 7M8.500 12.500A4 4 0 0 1 12 9.500" />
          <circle cx="11.500" cy="12" r="1" fill="#fff" stroke="none" />
        </svg>
      </button>
      <button aria-label="Volumen" className="flex w-[23px] justify-center">
        <svg width="16" height="14" viewBox="0 0 16 14" fill="none" stroke="#fff">
          <path d="M.5 5v4.500h2.500L7 13V1L3 5zM9 5q1.500 2 0 4M11 3q3 4 0 8M13 1q4.500 6 0 12" />
        </svg>
      </button>
      <button className="ml-[6px]">ESP</button>
      <button className="ml-3 text-center leading-4">
        8:00 p. m.
        <br />
        21/05/2020
      </button>
      <button aria-label="Notificaciones" className="ml-4">
        <svg width="24" height="24" viewBox="0 0 24 24">
          <path d="M0 3h15v12H9l-3 3v-3H0z" fill="#fff" />
          <path d="M2 6.500h11M2 9.500h11M2 12.500h8" stroke="#36444a" />
          <circle cx="14.500" cy="16.500" r="7" fill="#3b4a50" stroke="#6d787d" />
          <text x="14.500" y="20" textAnchor="middle" fontSize="10" fontWeight="600" fill="#fff">12</text>
        </svg>
      </button>
    </div>
  </div>
);

export default function App() {
  return (
    <div className="flex h-screen flex-col overflow-hidden bg-[#e6e6e6] font-['Open_Sans','Noto_Sans',sans-serif]">
      <div className="relative shrink-0 bg-[#217346]">
        <svg width="450" height="59" viewBox="0 0 450 59" className="absolute right-0 top-0" fill="#216340" opacity=".7">
          <path d="M85 0h150l-10 20c-20 10-50 8-60 14-20 12-60 8-80 8 5-14-10-20 0-42z" />
          <path d="M200 0h180l-15 24c-20 16-90 18-140 12-15 4-20 2-30 0z" />
          <path d="M400 30c10-10 30-4 50-4v14c-20 6-40 4-52-2z" />
          <path d="M10 4h70v28c-30 4-60 4-75 0z" opacity=".4" />
        </svg>
        <TitleBar />
        <TabBar />
      </div>
      <Ribbon />
      <FormulaBar />
      <Sheet />
      <SheetBar />
      <StatusBar />
      <Taskbar />
    </div>
  );
}
